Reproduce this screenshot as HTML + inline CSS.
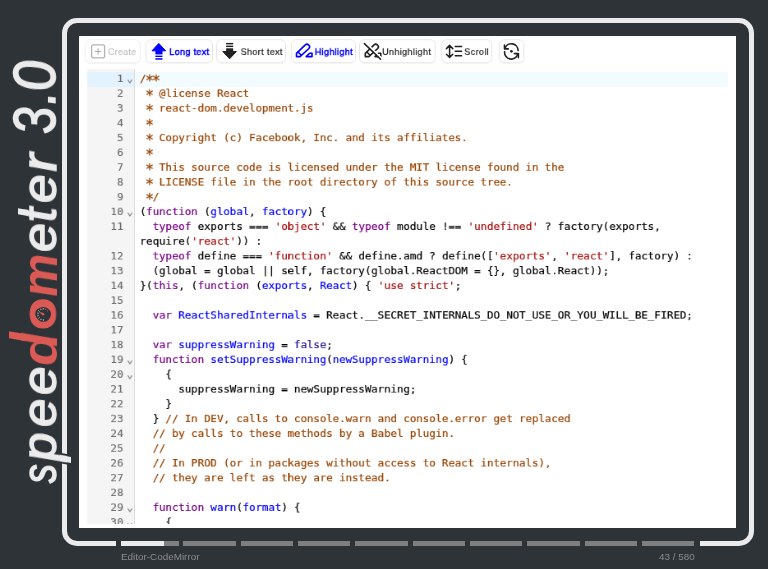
<!DOCTYPE html>
<html lang="en">
<head>
<meta charset="utf-8">
<title>Speedometer 3.0</title>
<style>
html,body{margin:0;padding:0;}
body{width:768px;height:569px;overflow:hidden;background:#2e3338;position:relative;font-family:"Liberation Sans",sans-serif;}
#frame{position:absolute;left:62.3px;top:18.3px;width:681.4px;height:517.4px;border:5px solid #ebebeb;border-radius:15px;}
#cut{position:absolute;left:116px;top:539px;width:584px;height:9px;background:#2e3338;}
.seg{position:absolute;top:540.6px;height:5.1px;background:#7f7f7f;}
.seg i{position:absolute;left:0;top:0;height:100%;background:#ebebeb;display:block;}
#info{will-change:transform;position:absolute;left:121.3px;top:550.5px;font-size:9.9px;line-height:12px;color:#8c8c8c;white-space:nowrap;}
#count{will-change:transform;position:absolute;right:73.8px;top:550.5px;font-size:9.9px;line-height:12px;color:#8c8c8c;white-space:nowrap;}
#view{position:absolute;left:79.2px;top:36px;width:657.2px;height:492px;overflow:hidden;background:#fff;}
#page{position:absolute;left:0;top:0;width:800px;height:600px;transform:scale(0.8215);transform-origin:0 0;will-change:transform;}
/* toolbar */
.btn{position:absolute;top:4.1px;height:29px;border:1px solid #e6e6e6;border-radius:6.5px;background:#fff;box-sizing:border-box;font-size:11px;color:#222;white-space:nowrap;box-shadow:0 1px 1.5px rgba(0,0,0,0.05);}
.btn span{position:absolute;top:7px;line-height:14px;}
.btn span.ls{letter-spacing:0.42px;-webkit-text-stroke:0.2px #222;}
.btn.blue{color:#0000ff;}
.btn.blue span{-webkit-text-stroke:0.45px #0000ff;letter-spacing:0.4px;}
.btn.dis{color:#b9b9b9;letter-spacing:0.3px;border-color:#efefef;}
#icons{position:absolute;left:0;top:0;}
/* editor */
#ed{position:absolute;left:10px;top:40px;width:780px;height:553.6px;overflow:hidden;font-family:"DejaVu Sans Mono","Liberation Mono",monospace;font-size:13px;line-height:18px;color:#000;}
#gut{position:absolute;left:0;top:0;width:57px;height:100%;background:#f5f5f5;border-right:1px solid #ddd;color:#6c6c6c;padding-top:4px;-webkit-text-stroke:0.15px;}
.gl{position:relative;height:18px;line-height:16px;}
.gl.act{background:#e2f2ff;}
.ln{position:absolute;right:13px;top:0;}
.fd{position:absolute;right:1px;top:0;width:8px;text-align:center;}
#code{position:absolute;left:58px;top:0;right:0;padding-top:4.3px;-webkit-text-stroke:0.22px;}
.cl{padding:0 2px 0 6px;white-space:pre;height:18px;line-height:16px;}
.cl.act{background:#f2fbff;}
.ax{display:inline-block;font-style:normal;transform:translateY(2.7px) scale(1.32);}
.c{color:#940;}.k{color:#708;}.d{color:#00f;}.s{color:#a11;}.a{color:#219;}
/* logo */
#logo{position:absolute;left:0;top:0;width:0;height:0;}
#logo span{position:absolute;transform-origin:0 0;will-change:transform;font-style:italic;color:#ebebeb;white-space:pre;line-height:1;}
#logo span.r{color:#dc5a55;}
#logo .bar{position:absolute;display:block;background:#ebebeb;transform:skewY(10deg);box-shadow:0 2.2px 0 #2e3338,0 -2.2px 0 #2e3338;}
#logo .bar.r{background:#dc5a55;}
</style>
</head>
<body>
<div id="frame"></div>
<div id="cut"></div>
<div class="seg" style="left:121px;width:57.6px"><i style="width:42.6px"></i></div>
<div class="seg" style="left:183.4px;width:52.4px"></div>
<div class="seg" style="left:240.7px;width:52.4px"></div>
<div class="seg" style="left:298.1px;width:52.4px"></div>
<div class="seg" style="left:355.4px;width:52.4px"></div>
<div class="seg" style="left:412.7px;width:52.4px"></div>
<div class="seg" style="left:470.1px;width:52.4px"></div>
<div class="seg" style="left:527.4px;width:52.4px"></div>
<div class="seg" style="left:584.7px;width:52.4px"></div>
<div class="seg" style="left:642.1px;width:52.4px"></div>
<div id="info">Editor-CodeMirror</div>
<div id="count">43 / 580</div>

<div id="logo">
<i class="bar w" style="left:60px;top:454.6px;width:10.6px;height:6.0px;transform-origin:0 0"></i>
<i class="bar r" style="left:9.3px;top:334.0px;width:15.7px;height:7.0px;transform-origin:100% 0"></i>
<i class="bar w" style="left:18.4px;top:209.8px;width:9.6px;height:6.0px;transform-origin:100% 0"></i>
<span class="w" style="left:15.68px;top:483.7px;font-size:47.4px;font-weight:400;-webkit-text-stroke:1.5px;transform:rotate(-90deg) scale(0.8,1) skewX(2deg)">s</span>
<span class="w" style="left:15.68px;top:461.6px;font-size:47.4px;font-weight:400;-webkit-text-stroke:1.5px;transform:rotate(-90deg) scale(1.08,1) skewX(2deg)">p</span>
<span class="w" style="left:15.68px;top:427.8px;font-size:47.4px;font-weight:400;-webkit-text-stroke:1.5px;transform:rotate(-90deg) scale(1.075,1) skewX(2deg)">e</span>
<span class="w" style="left:15.68px;top:396.3px;font-size:47.4px;font-weight:400;-webkit-text-stroke:1.5px;transform:rotate(-90deg) scale(1.0792,1) skewX(2deg)">e</span>
<span class="r" style="left:15.07px;top:367.0px;font-size:50px;font-weight:700;transform:rotate(-90deg) scale(1.08,1) skewX(2deg)">d</span>
<span class="r" style="left:16.2px;top:330.2px;font-size:50px;font-weight:700;-webkit-text-stroke:1.0px;font-style:normal;transform:rotate(-90deg) scale(1.0571,0.9448)">o</span>
<span class="r" style="left:15.07px;top:298.4px;font-size:50px;font-weight:700;transform:rotate(-90deg) scale(0.978,1) skewX(2deg)">m</span>
<span class="w" style="left:15.68px;top:252.8px;font-size:47.4px;font-weight:400;-webkit-text-stroke:1.5px;transform:rotate(-90deg) scale(1.0958,1) skewX(2deg)">e</span>
<span class="w" style="left:15.68px;top:222.8px;font-size:47.4px;font-weight:400;-webkit-text-stroke:1.5px;transform:rotate(-90deg) scale(1.08,1) skewX(2deg)">t</span>
<span class="w" style="left:15.68px;top:204.4px;font-size:47.4px;font-weight:400;-webkit-text-stroke:1.5px;transform:rotate(-90deg) scale(1.0833,1) skewX(2deg)">e</span>
<span class="w" style="left:15.68px;top:172.6px;font-size:47.4px;font-weight:400;-webkit-text-stroke:1.5px;transform:rotate(-90deg) scale(1.1824,1) skewX(2deg)">r</span>
<span class="w" style="left:6.08px;top:136.1px;font-size:58.5px;font-weight:400;-webkit-text-stroke:1.5px;transform:rotate(-90deg) scale(0.8419,1) skewX(3.5deg)">3</span>
<span class="w" style="left:6.08px;top:107.2px;font-size:58.5px;font-weight:400;-webkit-text-stroke:1.5px;transform:rotate(-90deg) scale(0.8222,1) skewX(3.5deg)">.</span>
<span class="w" style="left:6.08px;top:93.1px;font-size:58.5px;font-weight:400;-webkit-text-stroke:1.5px;transform:rotate(-90deg) scale(0.9467,1) skewX(3.5deg)">0</span>
</div>

<div id="view"><div id="page">
<div id="toolbar">
<div class="btn dis" style="left:7px;width:68.2px"><span style="left:27.2px">Create</span></div>
<div class="btn blue" style="left:81.1px;width:82.3px"><span style="left:27.8px">Long text</span></div>
<div class="btn" style="left:166.6px;width:85.3px"><span class="ls" style="left:29.2px">Short text</span></div>
<div class="btn blue" style="left:257.6px;width:79px"><span style="left:28.4px">Highlight</span></div>
<div class="btn" style="left:341px;width:92.7px"><span class="ls" style="left:27px">Unhighlight</span></div>
<div class="btn" style="left:440.7px;width:62.8px"><span class="ls" style="left:27.4px">Scroll</span></div>
<div class="btn" style="left:510.7px;width:31.4px"></div>
</div>
<div id="ed">
<div id="gut">
<div class="gl act" style="height:18px"><span class="ln">1</span><span class="fd">⌄</span></div>
<div class="gl" style="height:18px"><span class="ln">2</span><span class="fd"></span></div>
<div class="gl" style="height:18px"><span class="ln">3</span><span class="fd"></span></div>
<div class="gl" style="height:18px"><span class="ln">4</span><span class="fd"></span></div>
<div class="gl" style="height:18px"><span class="ln">5</span><span class="fd"></span></div>
<div class="gl" style="height:18px"><span class="ln">6</span><span class="fd"></span></div>
<div class="gl" style="height:18px"><span class="ln">7</span><span class="fd"></span></div>
<div class="gl" style="height:18px"><span class="ln">8</span><span class="fd"></span></div>
<div class="gl" style="height:18px"><span class="ln">9</span><span class="fd"></span></div>
<div class="gl" style="height:18px"><span class="ln">10</span><span class="fd">⌄</span></div>
<div class="gl" style="height:36px"><span class="ln">11</span><span class="fd"></span></div>
<div class="gl" style="height:18px"><span class="ln">12</span><span class="fd"></span></div>
<div class="gl" style="height:18px"><span class="ln">13</span><span class="fd"></span></div>
<div class="gl" style="height:18px"><span class="ln">14</span><span class="fd"></span></div>
<div class="gl" style="height:18px"><span class="ln">15</span><span class="fd"></span></div>
<div class="gl" style="height:18px"><span class="ln">16</span><span class="fd"></span></div>
<div class="gl" style="height:18px"><span class="ln">17</span><span class="fd"></span></div>
<div class="gl" style="height:18px"><span class="ln">18</span><span class="fd"></span></div>
<div class="gl" style="height:18px"><span class="ln">19</span><span class="fd">⌄</span></div>
<div class="gl" style="height:18px"><span class="ln">20</span><span class="fd">⌄</span></div>
<div class="gl" style="height:18px"><span class="ln">21</span><span class="fd"></span></div>
<div class="gl" style="height:18px"><span class="ln">22</span><span class="fd"></span></div>
<div class="gl" style="height:18px"><span class="ln">23</span><span class="fd"></span></div>
<div class="gl" style="height:18px"><span class="ln">24</span><span class="fd"></span></div>
<div class="gl" style="height:18px"><span class="ln">25</span><span class="fd"></span></div>
<div class="gl" style="height:18px"><span class="ln">26</span><span class="fd"></span></div>
<div class="gl" style="height:18px"><span class="ln">27</span><span class="fd"></span></div>
<div class="gl" style="height:18px"><span class="ln">28</span><span class="fd"></span></div>
<div class="gl" style="height:18px"><span class="ln">29</span><span class="fd">⌄</span></div>
<div class="gl" style="height:18px"><span class="ln">30</span><span class="fd">⌄</span></div>
<div class="gl" style="height:18px"><span class="ln">31</span><span class="fd"></span></div>
</div>
<div id="code">
<div class="cl act"><span class="c">/<i class="ax">*</i><i class="ax">*</i></span></div>
<div class="cl"><span class="c"> <i class="ax">*</i> @license React</span></div>
<div class="cl"><span class="c"> <i class="ax">*</i> react-dom.development.js</span></div>
<div class="cl"><span class="c"> <i class="ax">*</i></span></div>
<div class="cl"><span class="c"> <i class="ax">*</i> Copyright (c) Facebook, Inc. and its affiliates.</span></div>
<div class="cl"><span class="c"> <i class="ax">*</i></span></div>
<div class="cl"><span class="c"> <i class="ax">*</i> This source code is licensed under the MIT license found in the</span></div>
<div class="cl"><span class="c"> <i class="ax">*</i> LICENSE file in the root directory of this source tree.</span></div>
<div class="cl"><span class="c"> <i class="ax">*</i>/</span></div>
<div class="cl">(<span class="k">function</span> (<span class="d">global</span>, <span class="d">factory</span>) {</div>
<div class="cl">  <span class="k">typeof</span> exports === <span class="s">'object'</span> && <span class="k">typeof</span> module !== <span class="s">'undefined'</span> ? factory(exports, </div>
<div class="cl">require(<span class="s">'react'</span>)) :</div>
<div class="cl">  <span class="k">typeof</span> define === <span class="s">'function'</span> && define.amd ? define([<span class="s">'exports'</span>, <span class="s">'react'</span>], factory) :</div>
<div class="cl">  (global = global || self, factory(global.ReactDOM = {}, global.React));</div>
<div class="cl">}(<span class="k">this</span>, (<span class="k">function</span> (<span class="d">exports</span>, <span class="d">React</span>) { <span class="s">'use strict'</span>;</div>
<div class="cl">&nbsp;</div>
<div class="cl">  <span class="k">var</span> <span class="d">ReactSharedInternals</span> = React.__SECRET_INTERNALS_DO_NOT_USE_OR_YOU_WILL_BE_FIRED;</div>
<div class="cl">&nbsp;</div>
<div class="cl">  <span class="k">var</span> <span class="d">suppressWarning</span> = <span class="a">false</span>;</div>
<div class="cl">  <span class="k">function</span> <span class="d">setSuppressWarning</span>(<span class="d">newSuppressWarning</span>) {</div>
<div class="cl">    {</div>
<div class="cl">      suppressWarning = newSuppressWarning;</div>
<div class="cl">    }</div>
<div class="cl">  } <span class="c">// In DEV, calls to console.warn and console.error get replaced</span></div>
<div class="cl">  <span class="c">// by calls to these methods by a Babel plugin.</span></div>
<div class="cl">  <span class="c">//</span></div>
<div class="cl">  <span class="c">// In PROD (or in packages without access to React internals),</span></div>
<div class="cl">  <span class="c">// they are left as they are instead.</span></div>
<div class="cl">&nbsp;</div>
<div class="cl">  <span class="k">function</span> <span class="d">warn</span>(<span class="d">format</span>) {</div>
<div class="cl">    {</div>
<div class="cl">      </div>
</div>
</div>
</div></div>
<svg id="icons" width="768" height="569" viewBox="0 0 768 569" fill="none">
<!-- gauge -->
<g><circle cx="43.4" cy="314.4" r="7.4" fill="#2e3338"/><path d="M43.40 319.30L43.40 320.70" stroke="#d8d8d8" stroke-width="0.9"/><path d="M41.29 318.82L40.69 320.09" stroke="#d8d8d8" stroke-width="0.9"/><path d="M39.59 317.48L38.50 318.36" stroke="#d8d8d8" stroke-width="0.9"/><path d="M38.64 315.54L37.27 315.87" stroke="#d8d8d8" stroke-width="0.9"/><path d="M38.61 313.38L37.24 313.09" stroke="#d8d8d8" stroke-width="0.9"/><path d="M39.51 311.42L38.40 310.56" stroke="#d8d8d8" stroke-width="0.9"/><path d="M41.18 310.03L40.54 308.79" stroke="#d8d8d8" stroke-width="0.9"/><path d="M43.27 309.50L43.24 308.10" stroke="#d8d8d8" stroke-width="0.9"/><path d="M45.39 309.92L45.96 308.64" stroke="#dc5a55" stroke-width="0.9"/><path d="M47.13 311.22L48.19 310.31" stroke="#dc5a55" stroke-width="0.9"/><path d="M38.68 311.78L44.03 313.26L44.45 314.98L42.77 315.54z" fill="#dc5a55"/></g>
<!-- create -->
<rect x="91.6" y="44.9" width="13" height="13" rx="2" stroke="#b4b4b4" stroke-width="1.3"/>
<path d="M98.1 48.2v6.4M94.9 51.4h6.4" stroke="#a8a8a8" stroke-width="1"/>
<!-- long text -->
<g fill="#0000ff"><path d="M158.8 43.4L165.6 50.8H152z" stroke="#0000ff" stroke-width="1" stroke-linejoin="round"/><rect x="155.4" y="50.8" width="7.1" height="3.6"/><rect x="155.4" y="55.6" width="7.1" height="1.4"/><rect x="155.4" y="58.2" width="7.1" height="1.5"/></g>
<!-- short text -->
<g fill="#222"><rect x="226.1" y="42.9" width="7.1" height="1.5"/><rect x="226.1" y="45.6" width="7.1" height="1.5"/><rect x="226.1" y="48.3" width="7.1" height="3.2"/><path d="M222.8 51.5H236.4L229.6 58.8z" stroke="#222" stroke-width="1" stroke-linejoin="round"/></g>
<!-- highlight -->
<g stroke="#0000ff" stroke-width="1.6" stroke-linejoin="round" stroke-linecap="round"><path d="M296.5 56.6V53.3L305.3 44.9a2.3 2.3 0 0 1 3.2 0l0.4 0.4a2.3 2.3 0 0 1 0 3.2L300 56.6z"/><path d="M298 52l3.3 3.3"/><path d="M306.2 56.6l3.4-3.3h2.4v3.3z"/></g>
<!-- unhighlight -->
<g stroke="#222" stroke-width="1.6" stroke-linejoin="round" stroke-linecap="round"><path d="M365.3 56.6V53.3L374.1 44.9a2.3 2.3 0 0 1 3.2 0l0.4 0.4a2.3 2.3 0 0 1 0 3.2L368.8 56.6z"/><path d="M366.8 52l3.3 3.3"/><path d="M375 56.6l3.4-3.3h2.4v3.3z"/><path d="M365.6 42.6l16 15.8" stroke="#fff" stroke-width="1.8"/><path d="M364.4 43.6l16.2 15.6" stroke-width="1.5"/></g>
<!-- scroll -->
<g stroke="#222" stroke-width="1.5" stroke-linecap="round" stroke-linejoin="round"><path d="M449.6 45.6v11.6M446.4 48.6l3.2-3.2 3.2 3.2M446.4 54.2l3.2 3.2 3.2-3.2"/><path d="M455.2 46.6h6.4M455.2 51.2h6.4M455.2 55.8h6.4"/></g>
<!-- refresh -->
<g stroke="#222" stroke-width="1.6" stroke-linecap="round" stroke-linejoin="round"><path d="M505 48.5A6.7 6.7 0 0 1 518.1 50.6"/><path d="M504.6 51.8A6.7 6.7 0 0 0 517.8 53.9"/><path d="M504.5 45V48.9H508.3"/><path d="M518.4 57.6V53.6H514.4"/><circle cx="511.4" cy="51.3" r="1.35" fill="#222" stroke="none"/></g>
</svg>
</body>
</html>
